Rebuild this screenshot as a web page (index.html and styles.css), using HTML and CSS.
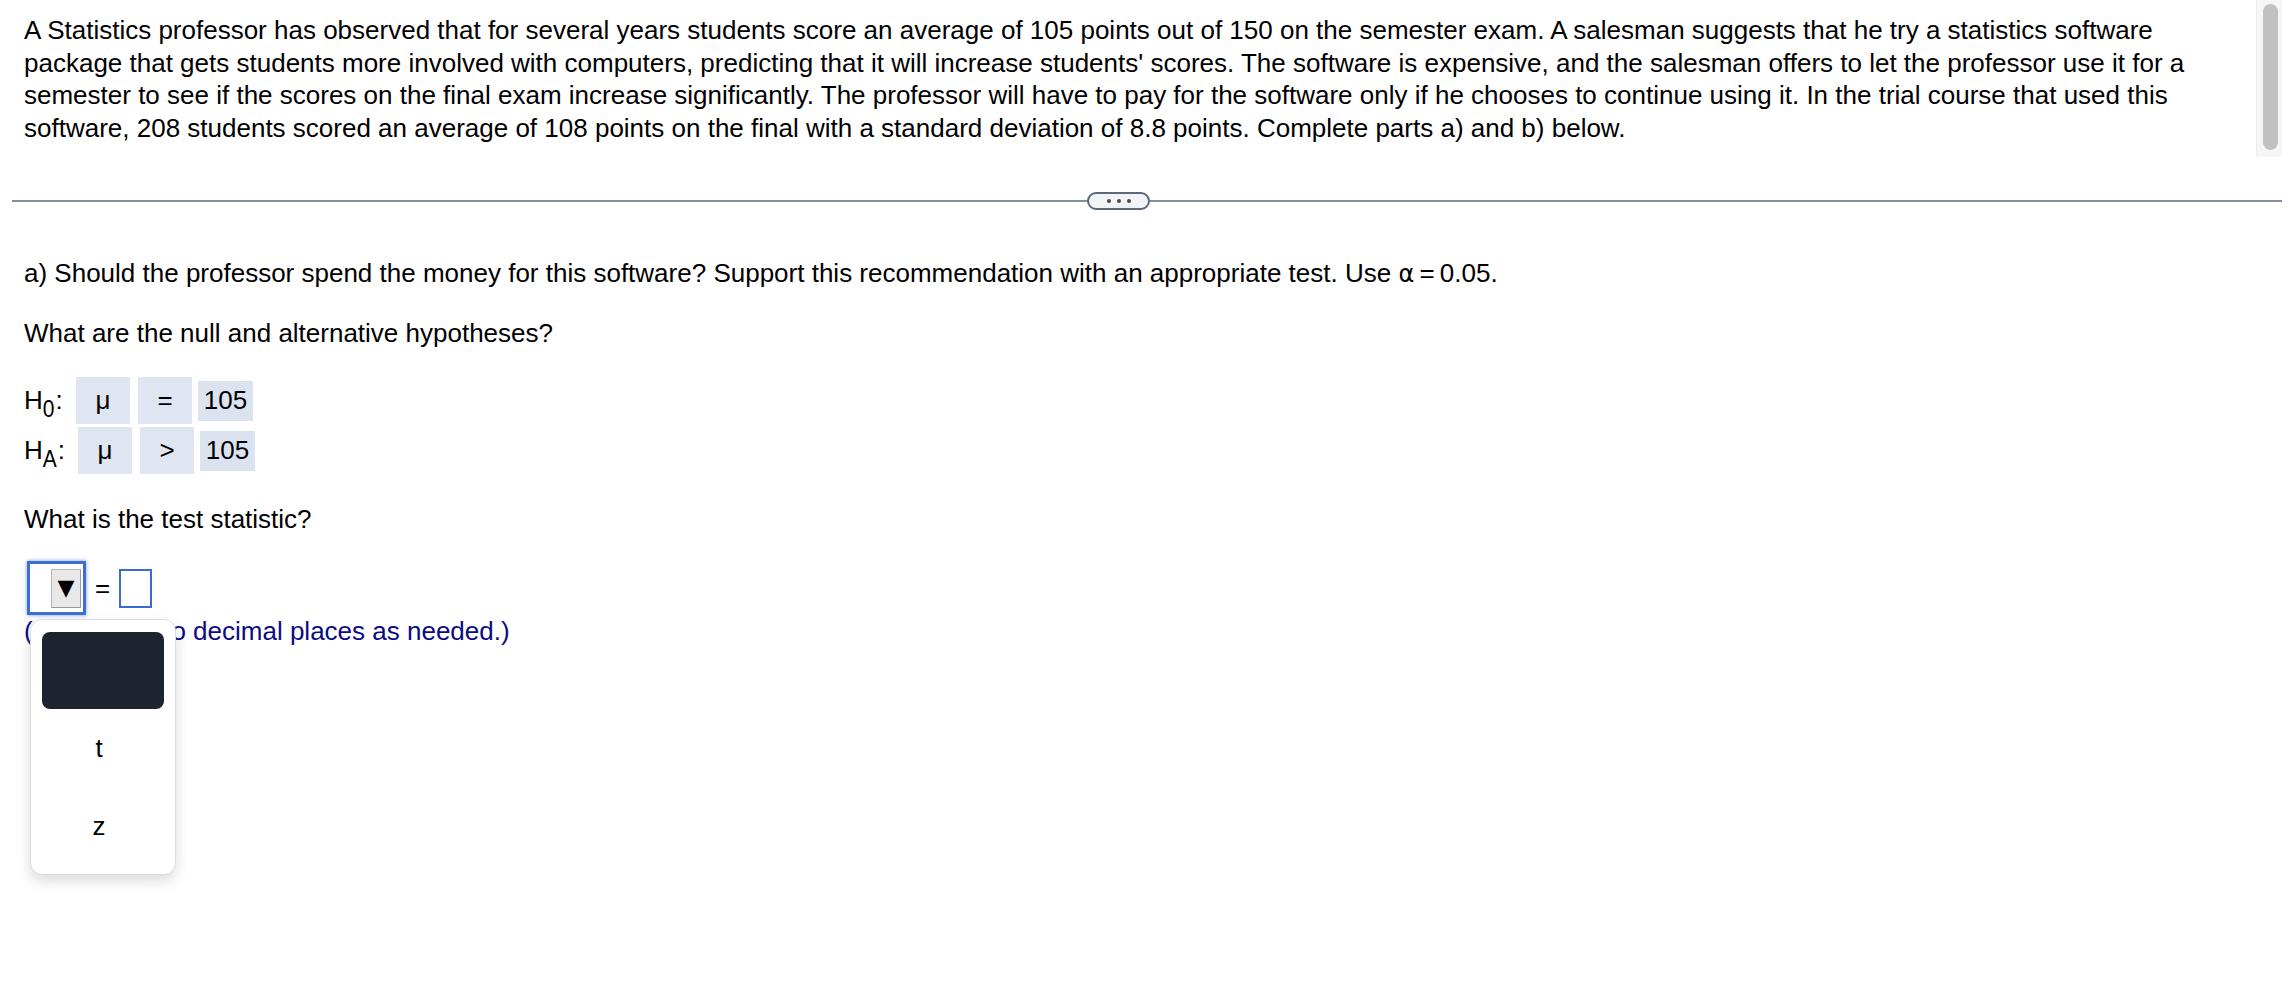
FILE: index.html
```html
<!DOCTYPE html>
<html lang="en">
<head>
<meta charset="utf-8">
<title>Hypothesis test</title>
<link rel="stylesheet" href="styles.css">
</head>
<body>
<div class="page">
  <section class="stem">
    <p class="stem-text">A Statistics professor has observed that for several years students score an average of 105 points out of 150 on the semester exam. A salesman suggests that he try a statistics software package that gets students more involved with computers, predicting that it will increase students' scores. The software is expensive, and the salesman offers to let the professor use it for a semester to see if the scores on the final exam increase significantly. The professor will have to pay for the software only if he chooses to continue using it. In the trial course that used this software, 208 students scored an average of 108 points on the final with a standard deviation of 8.8 points. Complete parts a) and b) below.</p>
    <div class="scrollbar"><div class="thumb"></div></div>
  </section>

  <div class="divider">
    <span class="rule rule-left"></span>
    <button class="more" type="button"><span class="dot"></span><span class="dot"></span><span class="dot"></span></button>
    <span class="rule rule-right"></span>
  </div>

  <section class="part">
    <p class="q q-a">a) Should the professor spend the money for this software? Support this recommendation with an appropriate test. Use <span class="alpha">α</span>&thinsp;=&thinsp;0.05.</p>
    <p class="q q-hyp">What are the null and alternative hypotheses?</p>

    <div class="hyps">
      <div class="hyp-row">
        <span class="hyp-label">H<sub>0</sub>:</span>
        <span class="cell">μ</span>
        <span class="cell">=</span>
        <span class="cell cell-num">105</span>
      </div>
      <div class="hyp-row hyp-row-a">
        <span class="hyp-label">H<sub>A</sub>:</span>
        <span class="cell">μ</span>
        <span class="cell">&gt;</span>
        <span class="cell cell-num">105</span>
      </div>
    </div>

    <p class="q q-stat">What is the test statistic?</p>

    <div class="stat-row">
      <div class="select"><span class="select-btn">▼</span></div>
      <span class="eq">=</span>
      <span class="answer"></span>
    </div>
    <p class="hint">(Round to two decimal places as needed.)</p>

    <div class="menu">
      <div class="menu-item menu-item-active"></div>
      <div class="menu-item">t</div>
      <div class="menu-item">z</div>
    </div>
  </section>
</div>
</body>
</html>
```

FILE: styles.css
```css
html, body {
  margin: 0;
  padding: 0;
  background: #ffffff;
}

body {
  font-family: "Liberation Sans", Arial, Helvetica, sans-serif;
  font-size: 26px;
  color: #000000;
}

.page {
  position: relative;
  width: 2292px;
  height: 982px;
}

/* ---------- stem ---------- */
.stem {
  display: flex;
  height: 158px;
  padding-left: 24px;
}

.stem-text {
  margin: 14px 0 0 0;
  width: 2200px;
  line-height: 32.6px;
}

.scrollbar {
  margin-left: auto;
  margin-right: 10px;
  width: 26px;
  height: 157px;
  background: #f6f6f6;
  border-left: 1px solid #ececec;
  box-sizing: border-box;
  padding: 4px 0 0 6px;
}

.thumb {
  width: 15px;
  height: 146px;
  border-radius: 8px;
  background: #c1c1c1;
}

/* ---------- divider ---------- */
.divider {
  display: flex;
  align-items: center;
  margin-top: 33px;
  padding: 0 10px 0 12px;
  height: 20px;
}

.rule {
  height: 2px;
  background: #858e9c;
}

.rule-left {
  width: 1075px;
}

.rule-right {
  flex: 1;
}

.more {
  display: flex;
  align-items: center;
  justify-content: center;
  gap: 6px;
  width: 63px;
  height: 18px;
  padding: 0;
  border: 2px solid #5d6878;
  border-radius: 9px;
  background: #f1f3f6;
  box-sizing: border-box;
}

.dot {
  width: 4px;
  height: 4px;
  border-radius: 50%;
  background: #464b53;
}

/* ---------- part a ---------- */
.part {
  padding-left: 24px;
}

.q {
  margin: 0;
  line-height: 33px;
}

.q-a {
  margin-top: 46px;
}

.q-hyp {
  margin-top: 26px;
}

.alpha {
  font-family: "DejaVu Sans", "Liberation Sans", sans-serif;
  font-size: 24px;
}

.hyps {
  margin-top: 27px;
  display: flex;
  flex-direction: column;
  gap: 3px;
}

.hyp-row {
  display: flex;
  align-items: center;
  height: 47px;
}

.hyp-label {
  width: 52px;
  line-height: 47px;
}

.hyp-row-a .hyp-label {
  width: 54px;
}

.hyp-label sub {
  display: inline-block;
  font-size: 21px;
  vertical-align: -7px;
  line-height: 1;
  margin-right: 1px;
  transform: scaleY(1.15);
}

.cell {
  display: flex;
  align-items: center;
  justify-content: center;
  width: 54px;
  height: 47px;
  margin-right: 8px;
  background: #e0e6f1;
}

.cell + .cell {
  margin-right: 6px;
}

.cell.cell-num {
  width: 55px;
  height: 40px;
  margin-right: 0;
  background: #dce3f0;
}

.q-stat {
  margin-top: 29px;
}

.stat-row {
  display: flex;
  align-items: center;
  margin-top: 25px;
  margin-left: 3px;
  height: 54px;
}

.select {
  display: flex;
  align-items: center;
  justify-content: flex-end;
  width: 59px;
  height: 54px;
  box-sizing: border-box;
  border: 3px solid #3d6ed5;
  box-shadow: 0 0 4px rgba(61, 110, 213, 0.7);
  padding-right: 2px;
  background: #ffffff;
}

.select-btn {
  display: flex;
  align-items: center;
  justify-content: center;
  width: 30px;
  height: 39px;
  box-sizing: border-box;
  background: #e8e8e8;
  border: 1px solid #b5b5b5;
  border-bottom-color: #9a9a9a;
  border-right-color: #9a9a9a;
  font-family: "DejaVu Sans", sans-serif;
  font-size: 22px;
  line-height: 1;
  color: #000;
}

.eq {
  margin: 0 9px 0 9px;
}

.answer {
  width: 33px;
  height: 39px;
  box-sizing: border-box;
  border: 2px solid #3a6bd2;
  background: #fff;
}

.hint {
  margin: 0;
  line-height: 32px;
  color: #0b0b86;
}

/* ---------- dropdown menu (overlay) ---------- */
.menu {
  position: absolute;
  left: 30px;
  top: 619px;
  width: 146px;
  height: 256px;
  box-sizing: border-box;
  padding: 12px 11px 0 11px;
  background: #ffffff;
  border: 1px solid #dcdcdc;
  border-radius: 12px;
  box-shadow: 0 6px 14px rgba(0, 0, 0, 0.14);
}

.menu-item {
  display: flex;
  align-items: center;
  justify-content: center;
  height: 78px;
  padding-right: 8px;
  color: #000;
}

.menu-item-active {
  height: 77px;
  padding-right: 0;
  border-radius: 8px;
  background: #1e2330;
}
```
